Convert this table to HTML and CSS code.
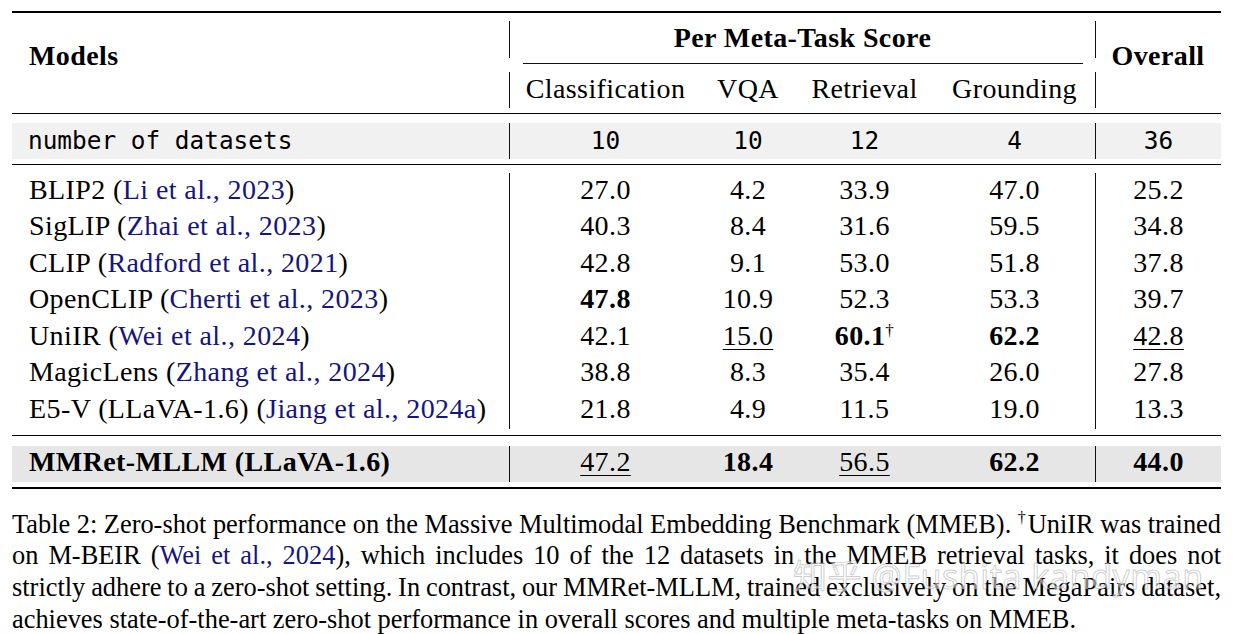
FILE: index.html
```html
<!DOCTYPE html>
<html lang="en">
<head>
<meta charset="utf-8">
<title>Table 2: MMEB zero-shot results</title>
<link rel="stylesheet" href="styles.css">
</head>
<body>
<div class="page">
  <div class="table">
    <div class="rule heavy"></div>

    <div class="head">
      <div class="h-models">Models</div>
      <div class="h-group">Per Meta-Task Score</div>
      <div class="h-vline h-vline-top"></div>
      <div class="cmid"></div>
      <div class="h-sub sep">Classification</div>
      <div class="h-sub">VQA</div>
      <div class="h-sub">Retrieval</div>
      <div class="h-sub">Grounding</div>
      <div class="h-vline h-vline-bot"></div>
      <div class="h-overall">Overall</div>
    </div>

    <div class="rule mid"></div>

    <div class="row count">
      <div class="cell name">number of datasets</div>
      <div class="cell sep">10</div>
      <div class="cell">10</div>
      <div class="cell">12</div>
      <div class="cell">4</div>
      <div class="cell sep">36</div>
    </div>

    <div class="rule mid"></div>

    <div class="body">
      <div class="row">
        <div class="cell name">BLIP2 (<span class="cite">Li et al., 2023</span>)</div>
        <div class="cell sep">27.0</div>
        <div class="cell">4.2</div>
        <div class="cell">33.9</div>
        <div class="cell">47.0</div>
        <div class="cell sep">25.2</div>
      </div>
      <div class="row">
        <div class="cell name">SigLIP (<span class="cite">Zhai et al., 2023</span>)</div>
        <div class="cell sep">40.3</div>
        <div class="cell">8.4</div>
        <div class="cell">31.6</div>
        <div class="cell">59.5</div>
        <div class="cell sep">34.8</div>
      </div>
      <div class="row">
        <div class="cell name">CLIP (<span class="cite">Radford et al., 2021</span>)</div>
        <div class="cell sep">42.8</div>
        <div class="cell">9.1</div>
        <div class="cell">53.0</div>
        <div class="cell">51.8</div>
        <div class="cell sep">37.8</div>
      </div>
      <div class="row">
        <div class="cell name">OpenCLIP (<span class="cite">Cherti et al., 2023</span>)</div>
        <div class="cell sep"><b>47.8</b></div>
        <div class="cell">10.9</div>
        <div class="cell">52.3</div>
        <div class="cell">53.3</div>
        <div class="cell sep">39.7</div>
      </div>
      <div class="row">
        <div class="cell name">UniIR (<span class="cite">Wei et al., 2024</span>)</div>
        <div class="cell sep">42.1</div>
        <div class="cell"><u>15.0</u></div>
        <div class="cell"><b>60.1</b><sup class="dag">†</sup></div>
        <div class="cell"><b>62.2</b></div>
        <div class="cell sep"><u>42.8</u></div>
      </div>
      <div class="row">
        <div class="cell name">MagicLens (<span class="cite">Zhang et al., 2024</span>)</div>
        <div class="cell sep">38.8</div>
        <div class="cell">8.3</div>
        <div class="cell">35.4</div>
        <div class="cell">26.0</div>
        <div class="cell sep">27.8</div>
      </div>
      <div class="row">
        <div class="cell name">E5-V (LLaVA-1.6) (<span class="cite">Jiang et al., 2024a</span>)</div>
        <div class="cell sep">21.8</div>
        <div class="cell">4.9</div>
        <div class="cell">11.5</div>
        <div class="cell">19.0</div>
        <div class="cell sep">13.3</div>
      </div>
    </div>

    <div class="rule mid"></div>

    <div class="row ours">
      <div class="cell name"><b>MMRet-MLLM (LLaVA-1.6)</b></div>
      <div class="cell sep"><u>47.2</u></div>
      <div class="cell"><b>18.4</b></div>
      <div class="cell"><u>56.5</u></div>
      <div class="cell"><b>62.2</b></div>
      <div class="cell sep"><b>44.0</b></div>
    </div>

    <div class="rule heavy"></div>
  </div>

  <p class="caption">
    <span class="cap-line">Table 2: Zero-shot performance on the Massive Multimodal Embedding Benchmark (MMEB). <sup class="cap-dag">†</sup>UniIR was trained</span>
    <span class="cap-line">on M-BEIR (<span class="cite">Wei et al., 2024</span>), which includes 10 of the 12 datasets in the MMEB retrieval tasks, it does not</span>
    <span class="cap-line">strictly adhere to a zero-shot setting. In contrast, our MMRet-MLLM, trained exclusively on the MegaPairs dataset,</span>
    <span class="cap-line last">achieves state-of-the-art zero-shot performance in overall scores and multiple meta-tasks on MMEB.</span>
  </p>

  <div class="watermark">知乎 @Fushita kandyman</div>
</div>
</body>
</html>
```

FILE: styles.css
```css
html, body {
  margin: 0;
  padding: 0;
  background: #ffffff;
}

.page {
  position: relative;
  width: 1234px;
  height: 634px;
  padding: 11px 0 0 12px;
  box-sizing: border-box;
  color: #000;
  font-family: "Liberation Serif", "Times New Roman", serif;
  overflow: hidden;
}

.table {
  width: 1209px;
  font-size: 28px;
  letter-spacing: 0.4px;
}

.rule {
  background: #000;
}
.rule.heavy { height: 2px; }
.rule.mid { height: 1px; }

.head,
.row {
  display: grid;
  grid-template-columns: 497px 192px 94px 139px 161px 126px;
}

/* ---------- header ---------- */
.head {
  grid-template-rows: 37px 14px 36px;
  padding: 8px 0 5px;
  font-weight: bold;
}

.h-models {
  grid-column: 1;
  grid-row: 1 / 4;
  align-self: center;
  padding: 0 0 17px 17px;
}

.h-group {
  grid-column: 2 / 6;
  grid-row: 1;
  border-left: 1px solid #111;
  display: flex;
  align-items: center;
  justify-content: center;
  padding-bottom: 4px;
}

.h-vline {
  grid-column: 6;
  border-left: 1px solid #111;
}
.h-vline-top { grid-row: 1; }
.h-vline-bot { grid-row: 3; }

.cmid {
  grid-column: 2 / 6;
  grid-row: 2;
  align-self: center;
  height: 1px;
  margin: 0 12px 3px 14px;
  background: #111;
}

.h-sub {
  grid-row: 3;
  display: flex;
  align-items: center;
  justify-content: center;
  font-weight: normal;
  padding-bottom: 3px;
}
.h-sub.sep { border-left: 1px solid #111; }

.h-overall {
  grid-column: 6;
  grid-row: 1 / 4;
  align-self: center;
  text-align: center;
  padding-bottom: 17px;
}

/* ---------- rows ---------- */
.row {
  height: 36px;
}

.body .row {
  height: 36.5px;
}

.cell {
  display: flex;
  align-items: center;
  justify-content: center;
  white-space: nowrap;
  padding-bottom: 3px;
}
.cell.name {
  justify-content: flex-start;
  padding-left: 17px;
}
.cell.sep {
  border-left: 1px solid #111;
}

.count {
  margin: 9px 0 5px;
  background: #f1f1f1;
  font-family: "DejaVu Sans Mono", "Liberation Mono", monospace;
  font-size: 24.4px;
  letter-spacing: 0;
}
.count .cell {
  padding-bottom: 1px;
}
.count .cell.name {
  padding-left: 16px;
}

.body {
  margin: 8px 0 6px;
}

.ours {
  margin: 10px 0 5px;
  background: #e6e6e6;
}

.cite {
  color: #15157f;
}

u {
  text-decoration-thickness: 1px;
  text-underline-offset: 4px;
}

.dag {
  font-size: 17px;
  font-weight: normal;
  align-self: flex-start;
  margin-top: 3px;
  line-height: 1;
}

/* ---------- caption ---------- */
.caption {
  margin: 20px 0 0;
  width: 1209px;
  font-size: 26.4px;
  line-height: 31.7px;
}

.cap-line {
  display: block;
  text-align: justify;
  text-align-last: justify;
  word-spacing: -2px;
}
.cap-line.last {
  text-align: left;
  text-align-last: left;
  word-spacing: 0;
}

.cap-dag {
  font-size: 16px;
  vertical-align: 10px;
  line-height: 0;
}

/* ---------- watermark ---------- */
.watermark {
  position: absolute;
  left: 793px;
  top: 550px;
  font-family: "Noto Sans", "Noto Sans CJK SC", sans-serif;
  font-size: 34px;
  letter-spacing: 0.5px;
  color: rgba(255, 255, 255, 0.55);
  -webkit-text-stroke: 1px rgba(110, 110, 110, 0.35);
  white-space: nowrap;
  pointer-events: none;
}
```
